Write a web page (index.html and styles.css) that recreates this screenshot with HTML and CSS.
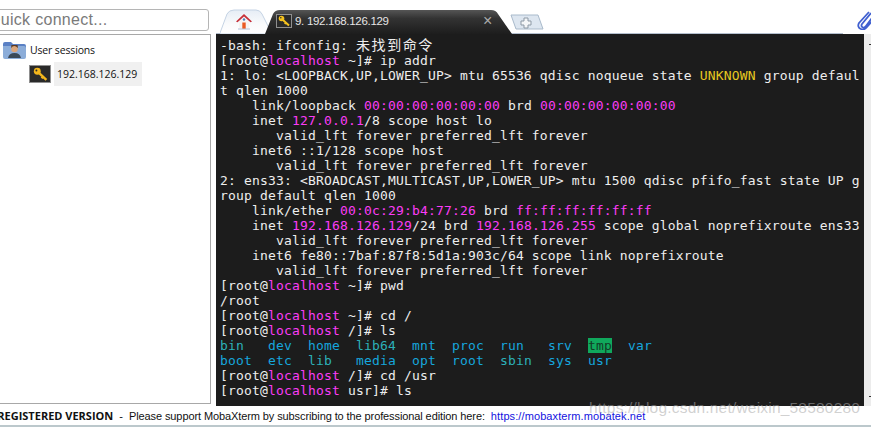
FILE: index.html
```html
<!DOCTYPE html>
<html lang="en">
<head>
<meta charset="utf-8">
<title>MobaXterm</title>
<link rel="stylesheet" href="styles.css">
</head>
<body>
<div class="app">
  <header class="top">
    <div class="quick"><span class="quick-text">Quick connect...</span></div>
    <div class="tabs">
      <div class="tab-home">
        <svg class="tab-shape" width="54" height="25" viewBox="0 0 54 25"><defs><linearGradient id="h" x1="0" y1="0" x2="0" y2="1"><stop offset="0" stop-color="#e6edf5"/><stop offset=".6" stop-color="#fafbfc"/><stop offset="1" stop-color="#fff"/></linearGradient></defs><path d="M0 24 L7 5 Q9 1 14 1 H36 Q40 1 42 5 L52 25 H0Z" fill="url(#h)" stroke="#c5d3e4"/></svg>
        <svg class="home-icon" width="18" height="18" viewBox="0 0 18 18"><path d="M4 8 9 4l5 4v8.500H4z" fill="#f7f4f2"/><path d="M7.300 10.500h3.400v6.500H7.300z" fill="#ea5a22"/><circle cx="9" cy="7.500" r="1.200" fill="#4a7fc0"/><path d="M1 9.500 9 2l8 7.500-1.500.8L9 4.500 2.500 10.300z" fill="#c62f38"/><path d="M3 17h12" stroke="#b3c2d8"/></svg>
      </div>
      <div class="tab-active">
        <svg class="tab-shape" width="248" height="25" viewBox="0 0 248 25"><defs><linearGradient id="g" x1="0" y1="0" x2="0" y2="1"><stop offset="0" stop-color="#555"/><stop offset=".35" stop-color="#333"/><stop offset="1" stop-color="#1d1d1d"/></linearGradient></defs><path d="M0 25 L8 5 Q10 1 15 1 H226 Q231 1 233 5 L247 25Z" fill="url(#g)"/></svg>
        <span class="key-box tab-key"><svg width="12" height="12" viewBox="0 0 12 12"><circle cx="3.500" cy="3.500" r="2.800" fill="#f5c21e"/><circle cx="2.800" cy="2.800" r=".8" fill="#2a2a2a"/><path d="M5 5l6 5.500M8 7.500 6.800 9" stroke="#f5c21e" stroke-width="2"/></svg></span>
        <span class="tab-title">9. 192.168.126.129</span>
        <span class="tab-close">×</span>
      </div>
      <div class="tab-new">
        <svg width="34" height="16" viewBox="0 0 34 16"><path d="M1 1h27l5 14H6z" fill="#dde6f0" stroke="#a9bacb"/><path d="M14 4h4v3h3v4h-3v3h-4v-3h-3V7h3z" fill="#f4f6f8" stroke="#8d99a5"/></svg>
      </div>
      <svg class="clip" width="16" height="20" viewBox="0 0 16 20"><path d="M14 3 5 14c-2 3 2 5 4 2l6-8M12 2 2 13c-3 5 4 9 8 4l6-7" fill="none" stroke="#4060d0" stroke-width="1.800"/></svg>
    </div>
  </header>
  <div class="main">
    <aside class="side">
      <div class="tree-row">
        <svg width="23" height="18" viewBox="0 0 23 18"><path d="M0 3q0-2 2-2h6l2 2h11q2 0 2 2v2H0z" fill="#5a80c4"/><path d="M0 5h21q2 0 2 2v9q0 2-2 2H2q-2 0-2-2z" fill="#8cadd9"/><circle cx="11.500" cy="8" r="3.300" fill="#dca67a"/><path d="M5 17q1-5 6.500-5T18 17z" fill="#3c4a58"/><path d="M8 7q3-4 7 0l-.5-3h-6z" fill="#5b3a22"/></svg>
        <span class="tree-label">User sessions</span>
      </div>
      <div class="tree-row session">
        <span class="key-box side-key"><svg width="15" height="15" viewBox="0 0 14 14"><circle cx="4" cy="4" r="3.200" fill="#f3b61c"/><circle cx="3.200" cy="3.200" r=".9" fill="#2a2a2a"/><path d="M6 6l6.500 6M9.500 9 8 10.500" stroke="#f3b61c" stroke-width="2.300"/></svg></span>
        <span class="session-label">192.168.126.129</span>
      </div>
    </aside>
    <pre class="term">-bash: ifconfig: <span class="cjk">未找到命令</span>
[root@<span class="m">localhost</span> ~]# ip addr
1: lo: &lt;LOOPBACK,UP,LOWER_UP&gt; mtu 65536 qdisc noqueue state <span class="y">UNKNOWN</span> group defaul
t qlen 1000
    link/loopback <span class="m">00:00:00:00:00:00</span> brd <span class="m">00:00:00:00:00:00</span>
    inet <span class="m">127.0.0.1</span>/8 scope host lo
       valid_lft forever preferred_lft forever
    inet6 ::1/128 scope host
       valid_lft forever preferred_lft forever
2: ens33: &lt;BROADCAST,MULTICAST,UP,LOWER_UP&gt; mtu 1500 qdisc pfifo_fast state UP g
roup default qlen 1000
    link/ether <span class="m">00:0c:29:b4:77:26</span> brd <span class="m">ff:ff:ff:ff:ff:ff</span>
    inet <span class="m">192.168.126.129</span>/24 brd <span class="m">192.168.126.255</span> scope global noprefixroute ens33
       valid_lft forever preferred_lft forever
    inet6 fe80::7baf:87f8:5d1a:903c/64 scope link noprefixroute
       valid_lft forever preferred_lft forever
[root@<span class="m">localhost</span> ~]# pwd
/root
[root@<span class="m">localhost</span> ~]# cd /
[root@<span class="m">localhost</span> /]# ls
<span class="c">bin</span>   <span class="b">dev</span>  <span class="b">home</span>  <span class="c">lib64</span>  <span class="b">mnt</span>  <span class="b">proc</span>  <span class="b">run</span>   <span class="b">srv</span>  <span class="t">tmp</span>  <span class="b">var</span>
<span class="b">boot</span>  <span class="b">etc</span>  <span class="c">lib</span>   <span class="b">media</span>  <span class="b">opt</span>  <span class="b">root</span>  <span class="c">sbin</span>  <span class="b">sys</span>  <span class="b">usr</span>
[root@<span class="m">localhost</span> /]# cd /usr
[root@<span class="m">localhost</span> usr]# ls</pre>
    <div class="edge"><i class="tick"></i><i class="tick"></i></div>
  </div>
  <footer class="status"><b class="reg">UNREGISTERED VERSION</b><span class="dash">-</span><span class="notice">Please support MobaXterm by subscribing to the professional edition here:</span><a class="link" href="#">https://mobaxterm.mobatek.net</a></footer>
  <div class="watermark">https://blog.csdn.net/weixin_58580280</div>
</div>
</body>
</html>
```
FILE: styles.css
```css
* { box-sizing: border-box; }
html, body { margin: 0; height: 100%; overflow: hidden; background: #fff; }
.app { position: relative; width: 871px; height: 427px; overflow: hidden; display: flex; flex-direction: column; font-family: "Liberation Sans", sans-serif; }
.top { display: flex; height: 34px; flex: none; }
.quick { width: 215px; height: 22px; margin: 9px 0 0 -6px; flex: none; border: 1px solid #b5b5b5; border-radius: 3px; display: flex; align-items: center; overflow: hidden; }
.quick-text { font: 16px "Liberation Sans", sans-serif; color: #7a7a7a; letter-spacing: .3px; margin-left: -7px; white-space: nowrap; }
.tabs { position: relative; flex: 1; border-bottom: 1px solid #b4bfce; margin: 0 28px 0 7px; }
.tab-shape { position: absolute; left: 0; top: 0; }
.tab-home { position: absolute; left: 4px; top: 9px; width: 54px; height: 25px; }
.home-icon { position: absolute; left: 15px; top: 3px; }
.tab-active { position: absolute; left: 49px; top: 9px; width: 248px; height: 25px; color: #e6e6e6; }
.key-box { position: absolute; display: flex; align-items: center; justify-content: center; background: #2a2a2a; border: 1px solid #8f8f8f; }
.tab-key { left: 11px; top: 5px; width: 16px; height: 14px; }
.tab-title { position: absolute; left: 30px; top: 4px; font: 11.500px/16px "Liberation Sans", sans-serif; letter-spacing: -.3px; white-space: nowrap; }
.tab-close { position: absolute; left: 218px; top: 1px; font: 16px/22px "Liberation Sans", sans-serif; color: #aaa; }
.tab-new { position: absolute; left: 294px; top: 14px; }
.clip { position: absolute; left: 641px; top: 10px; }
.main { flex: none; height: 372px; display: flex; min-height: 0; }
.side { width: 211px; height: 370px; flex: none; border: 1px solid #a8a8a8; border-left: 0; padding: 6px 0 0 3px; }
.tree-row { display: flex; align-items: center; gap: 4px; height: 18px; font: 10.500px "Open Sans", "Liberation Sans", sans-serif; color: #111; }
.tree-label { letter-spacing: -.15px; }
.session { margin: 3px 0 0 26px; gap: 3px; height: 24px; }
.side-key { position: static; width: 22px; height: 18px; }
.session-label { background: #f0f0f0; height: 24px; padding: 0 3px; line-height: 24px; width: 88px; white-space: nowrap; }
.term { margin: 0 0 0 5px; width: 648px; height: 372px; flex: none; background: #1c1c1c; color: #eeeeee; padding: 3px 0 0 4px; font: 13px/15px "DejaVu Sans Mono", monospace; letter-spacing: .17px; overflow: hidden; }
.cjk { font-family: "Noto Sans CJK SC", sans-serif; font-size: 14px; letter-spacing: 1.6px; line-height: 15px; }
.m { color: #fb3cf6; }
.y { color: #e8c820; }
.b { color: #16a6dc; }
.c { color: #2cb0b8; }
.t { background: #10a85c; color: #123c26; }
.edge { width: 7px; height: 372px; flex: none; background: #ececec; display: flex; flex-direction: column; justify-content: space-between; align-items: flex-end; padding: 10px 0 9px; }
.tick { width: 2px; height: 1px; background: #333; }
.status { height: 21px; flex: none; display: flex; align-items: center; font: 11px "Liberation Sans", sans-serif; color: #111; white-space: nowrap; margin-left: -20px; border-bottom: 2px solid #bcc8cc; }
.reg { font: 700 11px "Open Sans", sans-serif; }
.dash { margin: 0 6px; }
.notice { letter-spacing: -.1px; }
.link { color: #1212e0; text-decoration: none; margin-left: 6px; letter-spacing: .1px; }
.watermark { position: absolute; left: 589px; top: 399px; font: 15.500px "Liberation Sans", sans-serif; color: rgba(170,170,170,.55); white-space: nowrap; letter-spacing: .2px; }
```
